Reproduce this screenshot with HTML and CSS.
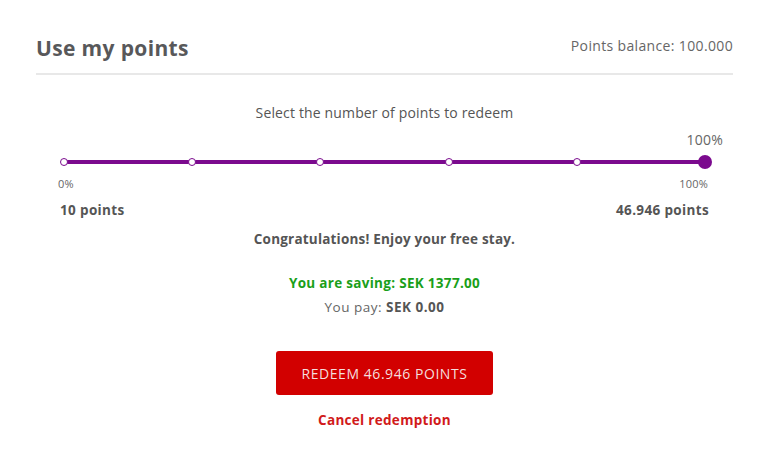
FILE: index.html
```html
<!DOCTYPE html>
<html>
<head>
<meta charset="utf-8">
<link rel="stylesheet" href="styles.css">
</head>
<body>
<div class="panel">
  <div class="header">
    <h1 class="title">Use my points</h1>
    <div class="balance">Points balance: 100.000</div>
  </div>
  <div class="body">
    <div class="prompt">Select the number of points to redeem</div>
    <div class="slider">
      <div class="value-label">100%</div>
      <div class="track">
        <span class="dot"></span>
        <span class="dot"></span>
        <span class="dot"></span>
        <span class="dot"></span>
        <span class="dot"></span>
        <span class="handle"></span>
      </div>
      <div class="ticks">
        <span>0%</span>
        <span>100%</span>
      </div>
    </div>
    <div class="range">
      <span>10 points</span>
      <span>46.946 points</span>
    </div>
    <div class="congrats">Congratulations! Enjoy your free stay.</div>
    <div class="saving">You are saving: SEK 1377.00</div>
    <div class="pay">You pay: <b>SEK 0.00</b></div>
    <button class="redeem">REDEEM 46.946 POINTS</button>
    <a class="cancel" href="#">Cancel redemption</a>
  </div>
</div>
</body>
</html>
```
FILE: styles.css
```css
* { box-sizing: border-box; }
body {
  margin: 0;
  background: #fff;
  font-family: "Open Sans", "Liberation Sans", sans-serif;
  color: #555;
}
.panel {
  width: 697px;
  margin: 0 0 0 36px;
  padding-top: 30px;
}
.header {
  display: flex;
  justify-content: space-between;
  align-items: center;
  height: 33px;
  border-bottom: 2px solid #e8e8e8;
  padding-bottom: 10px;
  box-sizing: content-box;
}
.title {
  margin: 0;
  font-size: 21px;
  font-weight: 700;
  color: #58585a;
  letter-spacing: 0.35px;
  margin-top: 2px;
}
.balance {
  font-size: 14px;
  color: #666;
  margin-top: -2px;
  letter-spacing: 0.35px;
}
.body {
  display: flex;
  flex-direction: column;
  align-items: center;
}
.prompt {
  margin-top: 28px;
  font-size: 14px;
  color: #555;
  line-height: 20px;
  letter-spacing: 0.15px;
}
.slider {
  align-self: stretch;
  padding: 0 28px;
  margin-top: 8px;
  display: flex;
  flex-direction: column;
}
.value-label {
  align-self: flex-end;
  font-size: 14px;
  color: #666;
  line-height: 18px;
  margin-right: -18px;
  letter-spacing: 0.2px;
}
.track {
  height: 4px;
  margin-top: 11px;
  background: #7b0a8e;
  display: flex;
  justify-content: space-between;
  align-items: center;
}
.dot {
  flex: none;
  width: 8px;
  height: 8px;
  border-radius: 50%;
  background: #fff;
  border: 1.5px solid #7b0a8e;
  margin: 0 -4px;
}
.handle {
  flex: none;
  width: 14px;
  height: 14px;
  border-radius: 50%;
  background: #7b0a8e;
  margin: 0 -7px;
}
.ticks {
  display: flex;
  justify-content: space-between;
  font-size: 11px;
  color: #666;
  margin-top: 13px;
  margin-left: -6px;
  margin-right: -3px;
  line-height: 14px;
  letter-spacing: 0.2px;
}
.range {
  align-self: stretch;
  display: flex;
  justify-content: space-between;
  padding: 0 24px;
  margin-top: 10px;
  font-size: 13.5px;
  font-weight: 700;
  color: #555;
  line-height: 18px;
  letter-spacing: 0.35px;
}
.congrats {
  margin-top: 11px;
  font-size: 13.5px;
  font-weight: 700;
  color: #555;
  line-height: 18px;
  letter-spacing: 0.2px;
}
.saving {
  margin-top: 26px;
  font-size: 13.5px;
  font-weight: 700;
  color: #1a9f1a;
  line-height: 18px;
  letter-spacing: 0.3px;
}
.pay {
  margin-top: 6px;
  font-size: 13.5px;
  color: #666;
  line-height: 18px;
  letter-spacing: 0.5px;
}
.pay b { color: #555; }
.redeem {
  margin-top: 35px;
  width: 217px;
  height: 44px;
  border: none;
  border-radius: 3px;
  background: #d20000;
  color: #f4dede;
  font-family: inherit;
  font-size: 14px;
  letter-spacing: 0.55px;
}
.cancel {
  margin-top: 16px;
  font-size: 13.5px;
  font-weight: 700;
  color: #d11a1a;
  text-decoration: none;
  line-height: 18px;
  letter-spacing: 0.3px;
}
```
